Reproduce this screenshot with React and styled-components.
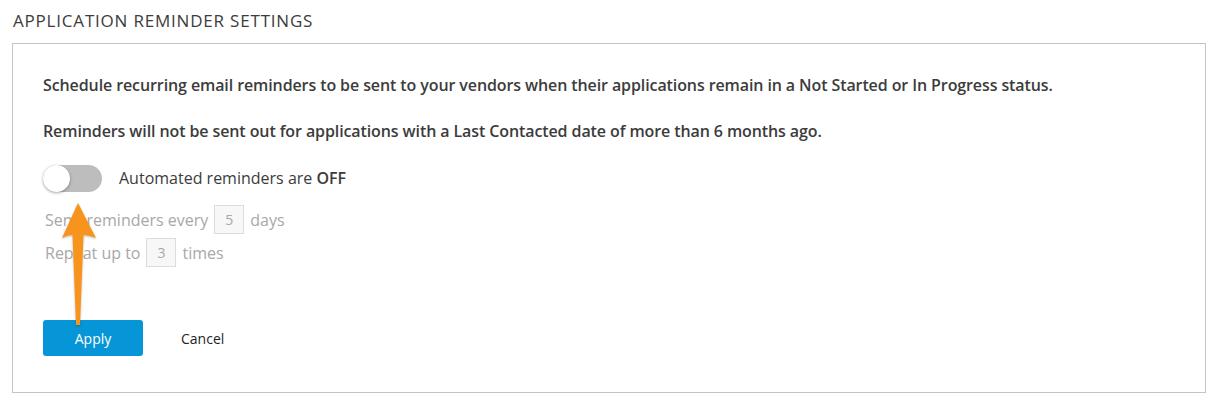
import React from 'react';
import styled, { createGlobalStyle } from 'styled-components';

const GlobalStyle = createGlobalStyle`
  html, body {
    margin: 0;
    padding: 0;
    background: #ffffff;
  }
  body {
    font-family: 'Open Sans', 'Noto Sans', Arial, sans-serif;
    color: #3c3c3c;
  }
`;

const Page = styled.div`
  position: relative;
  width: 1218px;
  height: 420px;
  padding: 11px 0 0 12px;
  box-sizing: border-box;
`;

const Heading = styled.h2`
  margin: 0 0 12px 1px;
  font-size: 17px;
  font-weight: 400;
  line-height: 20px;
  letter-spacing: 0.8px;
  color: #3c3c3c;
`;

const Panel = styled.section`
  width: 1194px;
  height: 350px;
  box-sizing: border-box;
  border: 1px solid #c4c4c4;
  padding: 31px 30px 0;
`;

const Notes = styled.div`
  display: flex;
  flex-direction: column;
  gap: 26px;
`;

const Notice = styled.p`
  margin: 0;
  font-size: 16px;
  font-weight: 600;
  line-height: 20px;
  letter-spacing: -0.1px;
  color: #3c3c3c;
`;

const ToggleRow = styled.div`
  display: flex;
  align-items: center;
  gap: 17px;
  margin-top: 23px;
  height: 28px;
`;

const Track = styled.button`
  position: relative;
  width: 59px;
  height: 27px;
  padding: 0;
  border: none;
  border-radius: 14px;
  background: ${p => (p.$on ? '#0696d7' : '#bdbdbd')};
  cursor: pointer;
`;

const Knob = styled.span`
  position: absolute;
  top: 0;
  left: ${p => (p.$on ? '32px' : '0')};
  width: 27px;
  height: 27px;
  border-radius: 50%;
  background: #ffffff;
  box-shadow: 0 1px 3px rgba(0, 0, 0, 0.35);
`;

const ToggleLabel = styled.span`
  font-size: 16px;
  color: #3c3c3c;

  strong {
    font-weight: 600;
  }
`;

const Settings = styled.div`
  display: flex;
  flex-direction: column;
  gap: 4px;
  margin-top: 13px;
`;

const SettingRow = styled.div`
  display: flex;
  align-items: center;
  gap: 6px;
  margin-left: 2px;
  font-size: 16px;
  color: #a8a8a8;
`;

const NumberBox = styled.span`
  display: inline-flex;
  align-items: center;
  justify-content: center;
  width: 28px;
  height: 27px;
  border: 1px solid #dcdcdc;
  background: #f7f7f7;
  font-size: 14px;
  color: #a8a8a8;
`;

const Actions = styled.div`
  display: flex;
  align-items: center;
  gap: 38px;
  margin-top: 53px;
`;

const PrimaryButton = styled.button`
  width: 100px;
  height: 36px;
  border: none;
  border-radius: 3px;
  background: #0696d7;
  color: #ffffff;
  font-family: inherit;
  font-size: 14px;
  cursor: pointer;
`;

const TextButton = styled.button`
  border: none;
  background: none;
  padding: 0;
  color: #1e1e1e;
  font-family: inherit;
  font-size: 14px;
  cursor: pointer;
`;

const Arrow = styled.svg`
  position: absolute;
  left: 58px;
  top: 200px;
  overflow: visible;
  filter: drop-shadow(0 1px 1px rgba(0, 0, 0, 0.25));
`;

const App = () => {
  return (
    <>
      <GlobalStyle />
      <Page>
        <Heading>APPLICATION REMINDER SETTINGS</Heading>
        <Panel>
          <Notes>
            <Notice>
              Schedule recurring email reminders to be sent to your vendors when their applications remain in a Not Started or In Progress status.
            </Notice>
            <Notice>
              Reminders will not be sent out for applications with a Last Contacted date of more than 6 months ago.
            </Notice>
          </Notes>

          <ToggleRow>
            <Track $on={false} aria-label="Automated reminders">
              <Knob $on={false} />
            </Track>
            <ToggleLabel>
              Automated reminders are <strong>OFF</strong>
            </ToggleLabel>
          </ToggleRow>

          <Settings>
            <SettingRow>
              Send reminders every <NumberBox>5</NumberBox> days
            </SettingRow>
            <SettingRow>
              Repeat up to <NumberBox>3</NumberBox> times
            </SettingRow>
          </Settings>

          <Actions>
            <PrimaryButton>Apply</PrimaryButton>
            <TextButton>Cancel</TextButton>
          </Actions>
        </Panel>

        <Arrow width="40" height="130" viewBox="0 0 40 130">
          <path
            d="M20 3 L38 38 Q30 35 25.5 35 L22 125 L18 125 L14.5 35 Q10 35 4 38 Z"
            fill="#f7941d"
          />
        </Arrow>
      </Page>
    </>
  );
};

export default App;
